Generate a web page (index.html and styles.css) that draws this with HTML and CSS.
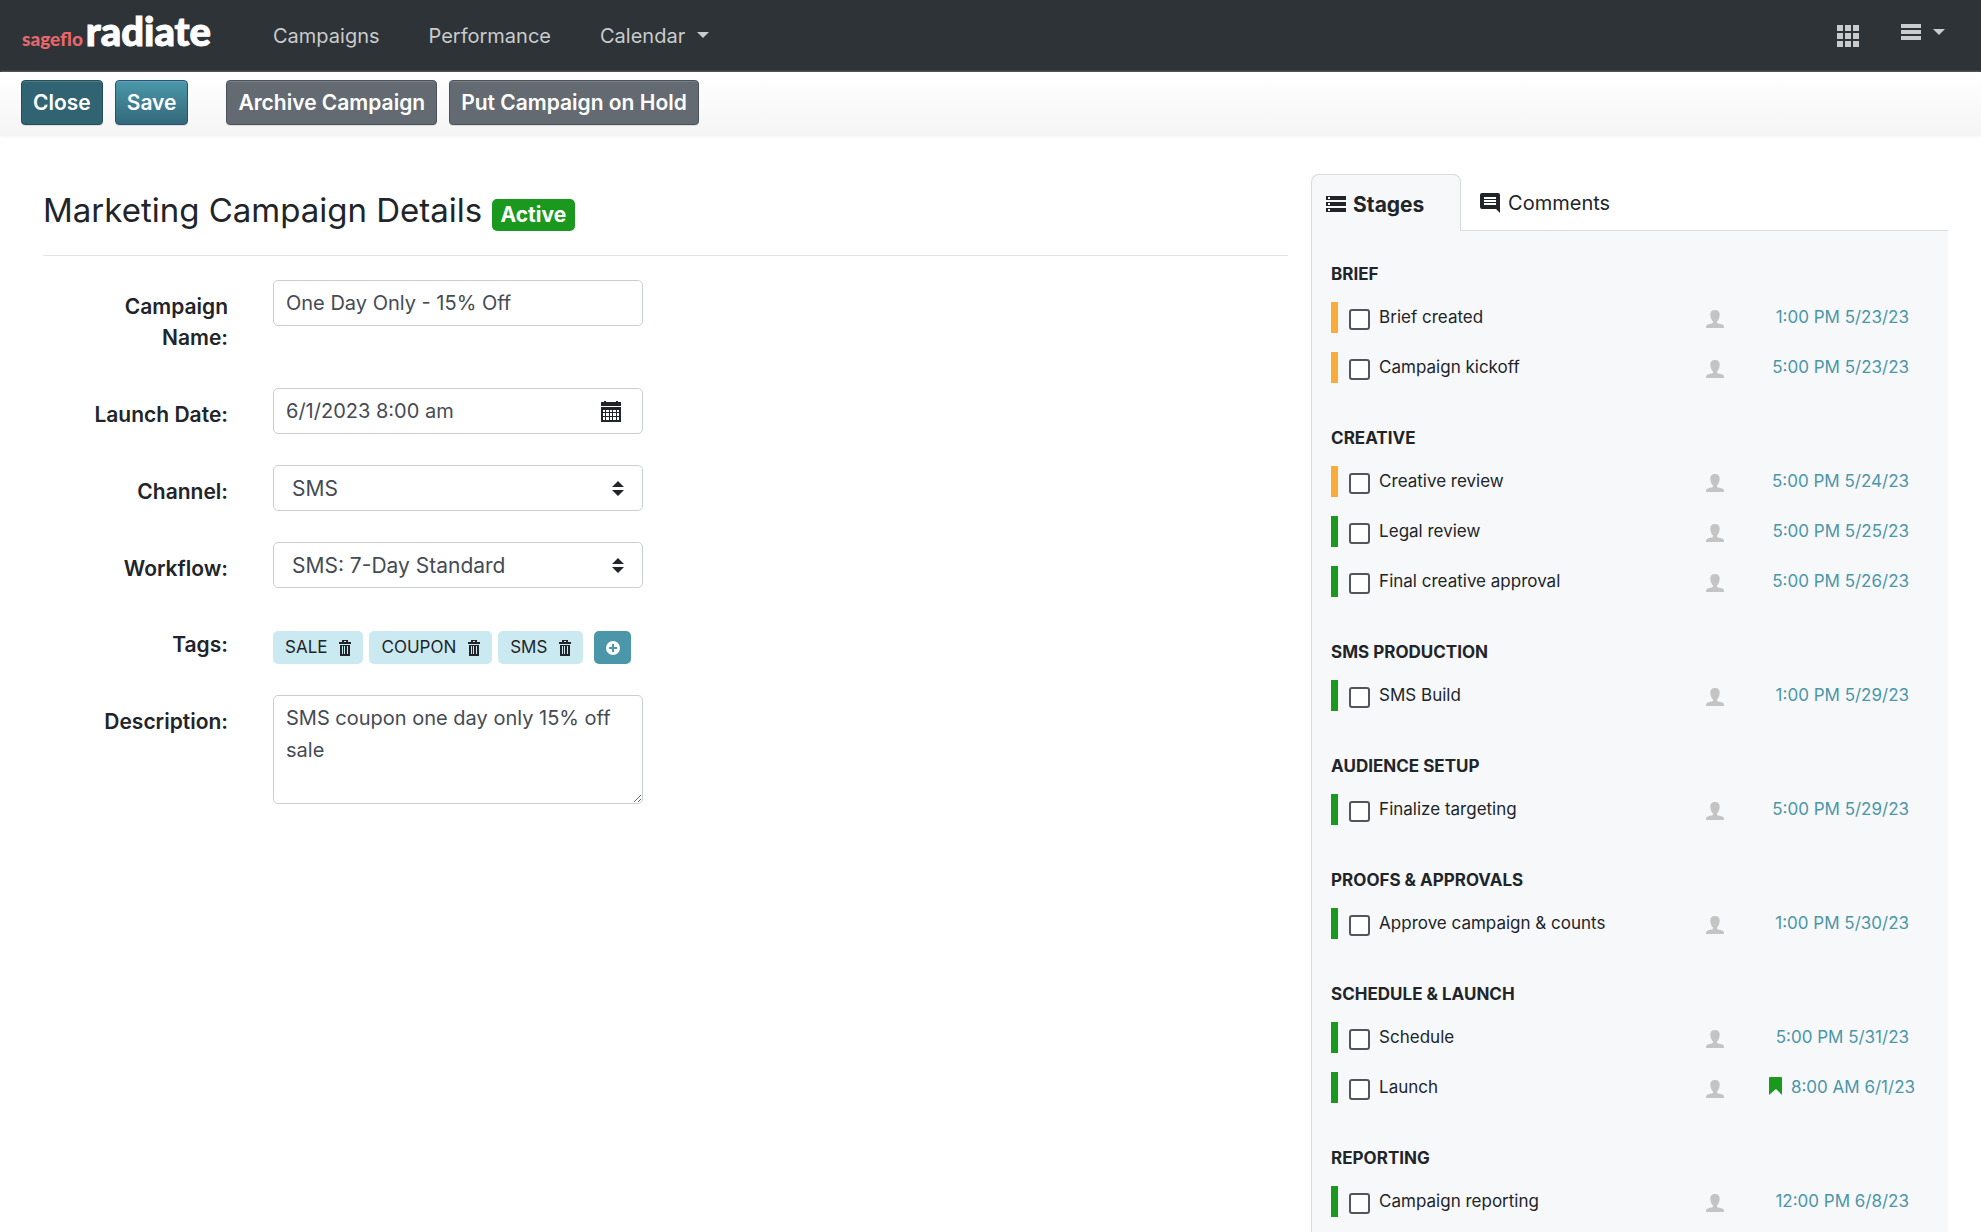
FILE: index.html
```html
<!DOCTYPE html>
<html lang="en">
<head>
    <meta charset="UTF-8">
    <meta name="viewport" content="width=device-width, initial-scale=1.0">
    <title>Marketing Campaign Details</title>
    <link rel="stylesheet" href="styles.css">
</head>
<body>

<svg class="sprite" aria-hidden="true">
    <symbol id="icon-user" viewBox="0 0 18 18">
        <path d="M9 0c3.200 0 4.700 1.800 4.700 4.500 0 1.500-.3 2.800-.8 4-.4 1.200-1 2.200-1.900 3v1.200c.9 1 2.300 1 3.800 1.300 2 .4 3.200 1.200 3.200 3V18H0v-1c0-1.800 1.200-2.600 3.200-3 1.500-.3 2.900-.3 3.800-1.300v-1.200c-.9-.8-1.500-1.800-1.900-3-.5-1.200-.8-2.500-.8-4C4.300 1.800 5.800 0 9 0z"/>
    </symbol>
    <symbol id="icon-trash" viewBox="0 0 12 16">
        <path d="M3 0h6v2h3v2H0V2h3zM5 1v1h2V1zM1 5h10v11H1zM3 6v8h1V6zM5 6v8h1V6zM8 6v8h1V6z" fill-rule="evenodd"/>
    </symbol>
</svg>

<nav class="navbar">
    <a class="brand" href="#"><span class="brand-small">sageflo</span><span class="brand-big">radiate</span></a>
    <div class="nav-links">
        <a href="#">Campaigns</a>
        <a href="#">Performance</a>
        <a class="dropdown" href="#">Calendar</a>
    </div>
    <div class="nav-icons">
        <a href="#" aria-label="Apps">
            <svg width="23" height="22" viewBox="0 0 23 22"><path d="M0 0h6v6H0zM8 0h6v6H8zM16 0h6v6h-6zM0 8h6v6H0zM8 8h6v6H8zM16 8h6v6h-6zM0 16h6v6H0zM8 16h6v6H8zM16 16h6v6h-6z"/></svg>
        </a>
        <a class="dropdown menu" href="#" aria-label="Menu">
            <svg width="20" height="17" viewBox="0 0 20 17"><path d="M0 0h20v4H0zM0 6h20v4H0zM0 12h20v4H0z"/></svg>
        </a>
    </div>
</nav>

<div class="toolbar">
    <button type="button" class="btn btn-close">Close</button>
    <button type="button" class="btn btn-save">Save</button>
    <button type="button" class="btn btn-gray first">Archive Campaign</button>
    <button type="button" class="btn btn-gray">Put Campaign on Hold</button>
</div>

<div class="page">
    <main>
        <h1>Marketing Campaign Details <span class="badge">Active</span></h1>
        <form>
            <div class="form-group">
                <label for="name">Campaign Name:</label>
                <input class="control" type="text" id="name" value="One Day Only - 15% Off">
            </div>
            <div class="form-group">
                <label for="launch">Launch Date:</label>
                <div class="control date">
                    <input type="text" id="launch" value="6/1/2023 8:00 am">
                    <button type="button" aria-label="Pick a date">
                        <svg width="20" height="21" viewBox="0 0 20 21">
                            <path d="M0 1h3V0h2v1h10V0h2v1h3v4H0z"/>
                            <path d="M0 6h20v15H0zM2 9v2h2V9zM5 9v2h3V9zM9 9v2h2V9zM12 9v2h3V9zM16 9v2h2V9zM2 12v3h2v-3zM5 12v3h3v-3zM9 12v3h2v-3zM12 12v3h3v-3zM16 12v3h2v-3zM2 16v3h2v-3zM5 16v3h3v-3zM9 16v3h2v-3zM12 16v3h3v-3zM16 16v3h2v-3z" fill-rule="evenodd"/>
                        </svg>
                    </button>
                </div>
            </div>
            <div class="form-group">
                <label for="channel">Channel:</label>
                <div class="select">
                    <select class="control" id="channel"><option>SMS</option></select>
                    <svg width="12" height="15" viewBox="0 0 12 15"><path d="M0 6l6-6 6 6zM0 9h12l-6 6z"/></svg>
                </div>
            </div>
            <div class="form-group">
                <label for="workflow">Workflow:</label>
                <div class="select">
                    <select class="control" id="workflow"><option>SMS: 7-Day Standard</option></select>
                    <svg width="12" height="15" viewBox="0 0 12 15"><path d="M0 6l6-6 6 6zM0 9h12l-6 6z"/></svg>
                </div>
            </div>
            <div class="form-group">
                <span class="label">Tags:</span>
                <div class="tags">
                    <span class="tag">SALE <button type="button" aria-label="Remove SALE"><svg width="12" height="16"><use href="#icon-trash"/></svg></button></span>
                    <span class="tag">COUPON <button type="button" aria-label="Remove COUPON"><svg width="12" height="16"><use href="#icon-trash"/></svg></button></span>
                    <span class="tag">SMS <button type="button" aria-label="Remove SMS"><svg width="12" height="16"><use href="#icon-trash"/></svg></button></span>
                    <button type="button" class="add-tag" aria-label="Add tag">
                        <svg width="14" height="14" viewBox="0 0 14 14"><path d="M7 0a7 7 0 1 0 0 14A7 7 0 0 0 7 0zM6 3h2v3h3v2H8v3H6V8H3V6h3z" fill-rule="evenodd"/></svg>
                    </button>
                </div>
            </div>
            <div class="form-group">
                <label for="description">Description:</label>
                <textarea class="control" id="description">SMS coupon one day only 15% off sale</textarea>
            </div>
        </form>
    </main>

    <aside>
        <div class="tabs">
            <a class="tab active" href="#">
                <svg width="20" height="16" viewBox="0 0 20 16"><path d="M0 0h20v4H0zM0 6h20v4H0zM0 12h20v4H0zM2 1v2h2V1zM2 7v2h2V7zM2 13v2h2v-2z" fill-rule="evenodd"/></svg>
                Stages
            </a>
            <a class="tab" href="#">
                <svg width="20" height="20" viewBox="0 0 20 20"><path d="M2 0h16a2 2 0 0 1 2 2v18l-4-4H2a2 2 0 0 1-2-2V2a2 2 0 0 1 2-2zM4 4v2h12V4zM4 7v2h12V7zM4 10v2h12v-2z" fill-rule="evenodd"/></svg>
                Comments
            </a>
        </div>
        <div class="stages" id="stages"></div>
    </aside>
</div>

<script>
    const stages = [
        ['Brief', [['Brief created', '1:00 PM 5/23/23', 'late'], ['Campaign kickoff', '5:00 PM 5/23/23', 'late']]],
        ['Creative', [['Creative review', '5:00 PM 5/24/23', 'late'], ['Legal review', '5:00 PM 5/25/23'], ['Final creative approval', '5:00 PM 5/26/23']]],
        ['SMS Production', [['SMS Build', '1:00 PM 5/29/23']]],
        ['Audience Setup', [['Finalize targeting', '5:00 PM 5/29/23']]],
        ['Proofs &amp; Approvals', [['Approve campaign &amp; counts', '1:00 PM 5/30/23']]],
        ['Schedule &amp; Launch', [['Schedule', '5:00 PM 5/31/23'], ['Launch', '8:00 AM 6/1/23', 'launch']]],
        ['Reporting', [['Campaign reporting', '12:00 PM 6/8/23']]]
    ];
    const bookmark = '<svg width="13" height="18" viewBox="0 0 13 18"><path d="M1 0h11a1 1 0 0 1 1 1v17l-6-6-7 6V1a1 1 0 0 1 1-1z"/></svg>';

    document.getElementById('stages').innerHTML = stages.map(([title, steps]) => `
        <section>
            <h2>${title}</h2>
            ${steps.map(([name, due, state]) => `
                <div class="step ${state || ''}">
                    <label><input type="checkbox"><span>${name}</span></label>
                    <svg class="user" width="18" height="18"><use href="#icon-user"/></svg>
                    <a class="due" href="#">${state === 'launch' ? bookmark : ''}${due}</a>
                </div>`).join('')}
        </section>`).join('');
</script>

</body>
</html>
```

FILE: styles.css
```css
* {
    box-sizing: border-box;
}
body {
    margin: 0;
    height: 100vh;
    overflow: hidden;
    display: flex;
    flex-direction: column;
    font-family: Inter, "Liberation Sans", sans-serif;
    font-size: 20px;
    line-height: 31px;
    color: #212529;
    background: #fff;
}
a {
    color: inherit;
    text-decoration: none;
}
button, input, select, textarea {
    font: inherit;
    color: inherit;
}
svg {
    fill: currentColor;
    flex: none;
}
.sprite {
    position: absolute;
    width: 0;
    height: 0;
}

/* top navigation */
.navbar {
    display: flex;
    align-items: center;
    height: 72px;
    flex: none;
    padding: 0 36px 0 22px;
    background: #2e3338;
    color: #c9cbcc;
}
.brand {
    display: flex;
    align-items: baseline;
    gap: 3px;
    width: 251px;
    padding-bottom: 2px;
    font-family: Lato, sans-serif;
    font-weight: 900;
}
.brand-small {
    font-size: 19px;
    color: #e8676b;
}
.brand-big {
    font-size: 40px;
    color: #fff;
    -webkit-text-stroke: 1px #fff;
}
.nav-links {
    display: flex;
    gap: 49px;
}
.nav-icons {
    display: flex;
    align-items: center;
    gap: 41px;
    margin-left: auto;
}
.nav-icons a {
    display: flex;
    align-items: center;
}
.nav-icons .menu {
    padding-bottom: 8px;
}
.dropdown::after {
    content: "";
    display: inline-block;
    margin-left: 12px;
    vertical-align: 5px;
    border: 6px solid transparent;
    border-top-color: currentColor;
    border-bottom: 0;
}

/* button row */
.toolbar {
    display: flex;
    flex: none;
    gap: 12px;
    padding: 8px 21px 11px;
    background: linear-gradient(#fff, #f5f5f5);
    box-shadow: 0 1px 3px #f5f5f5;
}
.btn {
    height: 45px;
    padding: 0 11px;
    border: 1px solid #4b5259;
    border-radius: 4px;
    font-size: 21px;
    font-weight: 600;
    color: #fff;
    box-shadow: inset 0 1px 0 rgba(255, 255, 255, .15), 0 1px 1px rgba(0, 0, 0, .1);
}
.btn-close {
    background: #316472;
    border-color: #264e58;
}
.btn-save {
    background: linear-gradient(#4b97aa, #32697a);
    border-color: #27507a;
}
.btn-gray {
    background: #636a71;
}
.btn-gray.first {
    margin-left: 26px;
}

.page {
    display: grid;
    grid-template-columns: 1.955fr 1fr;
    gap: 23px;
    flex: 1;
    min-height: 0;
    padding: 38px 33px 0 43px;
}

/* campaign form */
h1 {
    margin: 0 0 24px;
    padding: 14px 0 23px;
    border-bottom: 1px solid #e2e4e6;
    font-size: 33px;
    font-weight: 400;
    line-height: 44px;
}
.badge {
    display: inline-block;
    padding: 0 9px;
    border-radius: 5px;
    font-size: 21px;
    font-weight: 700;
    line-height: 32px;
    color: #fff;
    background: #1b991f;
}
.form-group {
    display: grid;
    grid-template-columns: 185px minmax(0, 370px);
    gap: 45px;
    align-items: start;
    margin-bottom: 31px;
}
.form-group > label, .label {
    padding: 11px 0 4px 40px;
    font-size: 21px;
    font-weight: 600;
    text-align: right;
}
.form-group > .label {
    padding: 10px 0 0;
}
.control {
    display: block;
    width: 100%;
    height: 46px;
    padding: 0 12px;
    border: 1px solid #c9ced6;
    border-radius: 5px;
    color: #454b54;
    background: #fff;
}
.date {
    display: flex;
    align-items: center;
}
.date input {
    flex: 1;
    min-width: 0;
    padding: 0;
    border: 0;
}
.date button {
    display: flex;
    padding: 0 9px;
    border: 0;
    background: none;
    color: #212529;
}
.select {
    display: grid;
    align-items: center;
}
.select > * {
    grid-area: 1 / 1;
}
.select svg {
    justify-self: end;
    margin-right: 19px;
    pointer-events: none;
}
.select select {
    appearance: none;
    padding-left: 18px;
    font-size: 21px;
}
textarea.control {
    height: 109px;
    padding: 6px 12px;
    line-height: 32px;
}
.tags {
    display: flex;
    gap: 6px;
    padding-top: 12px;
}
.tag {
    display: flex;
    align-items: center;
    gap: 12px;
    height: 33px;
    padding: 0 12px;
    border-radius: 5px;
    font-size: 17px;
    background: #cbe9f0;
}
.tag button {
    display: flex;
    padding: 0;
    border: 0;
    background: none;
}
.add-tag {
    display: flex;
    align-items: center;
    justify-content: center;
    width: 37px;
    height: 33px;
    margin-left: 5px;
    border: 0;
    border-radius: 5px;
    color: #fff;
    background: #4b96a9;
}

/* stages panel */
aside {
    display: flex;
    flex-direction: column;
    min-height: 0;
}
.tabs {
    display: flex;
}
.tab {
    display: flex;
    align-items: center;
    gap: 8px;
    height: 57px;
    padding: 2px 19px 0;
    border-bottom: 1px solid #d9dbde;
}
.tab:last-child {
    flex: 1;
}
.tab.active {
    width: 150px;
    padding: 2px 14px 0;
    gap: 7px;
    border: 1px solid #d9dbde;
    border-bottom: 0;
    border-radius: 8px 8px 0 0;
    font-size: 21px;
    font-weight: 700;
    background: #f7f8fa;
}
.stages {
    flex: 1;
    min-height: 0;
    overflow: hidden;
    padding: 29px 33px 0 19px;
    border-left: 1px solid #d9dbde;
    background: #f7f8fa;
}
section {
    padding-bottom: 22px;
}
h2 {
    margin: 0 0 13px;
    font-size: 17px;
    font-weight: 700;
    line-height: 29px;
    text-transform: uppercase;
}
.step {
    display: grid;
    grid-template-columns: 1fr 18px 185px;
    align-items: center;
    height: 31px;
    margin-bottom: 19px;
    padding-right: 6px;
    border-left: 7px solid #1b991f;
    font-size: 17px;
}
.step.late {
    border-color: #f9ac3a;
}
.step label {
    display: flex;
    align-items: center;
    gap: 9px;
    padding-left: 11px;
}
.step input {
    appearance: none;
    width: 21px;
    height: 21px;
    margin: 3px 0 0;
    border: 2px solid #50555e;
    border-radius: 3px;
    background: #fff;
}
.step .user {
    margin-top: 2px;
    color: #c4c4c4;
}
.due {
    display: flex;
    align-items: center;
    justify-content: flex-end;
    gap: 9px;
    color: #4b96a9;
}
.due svg {
    margin-bottom: 4px;
    color: #1b991f;
}
.launch .due {
    margin-right: -6px;
}
```
